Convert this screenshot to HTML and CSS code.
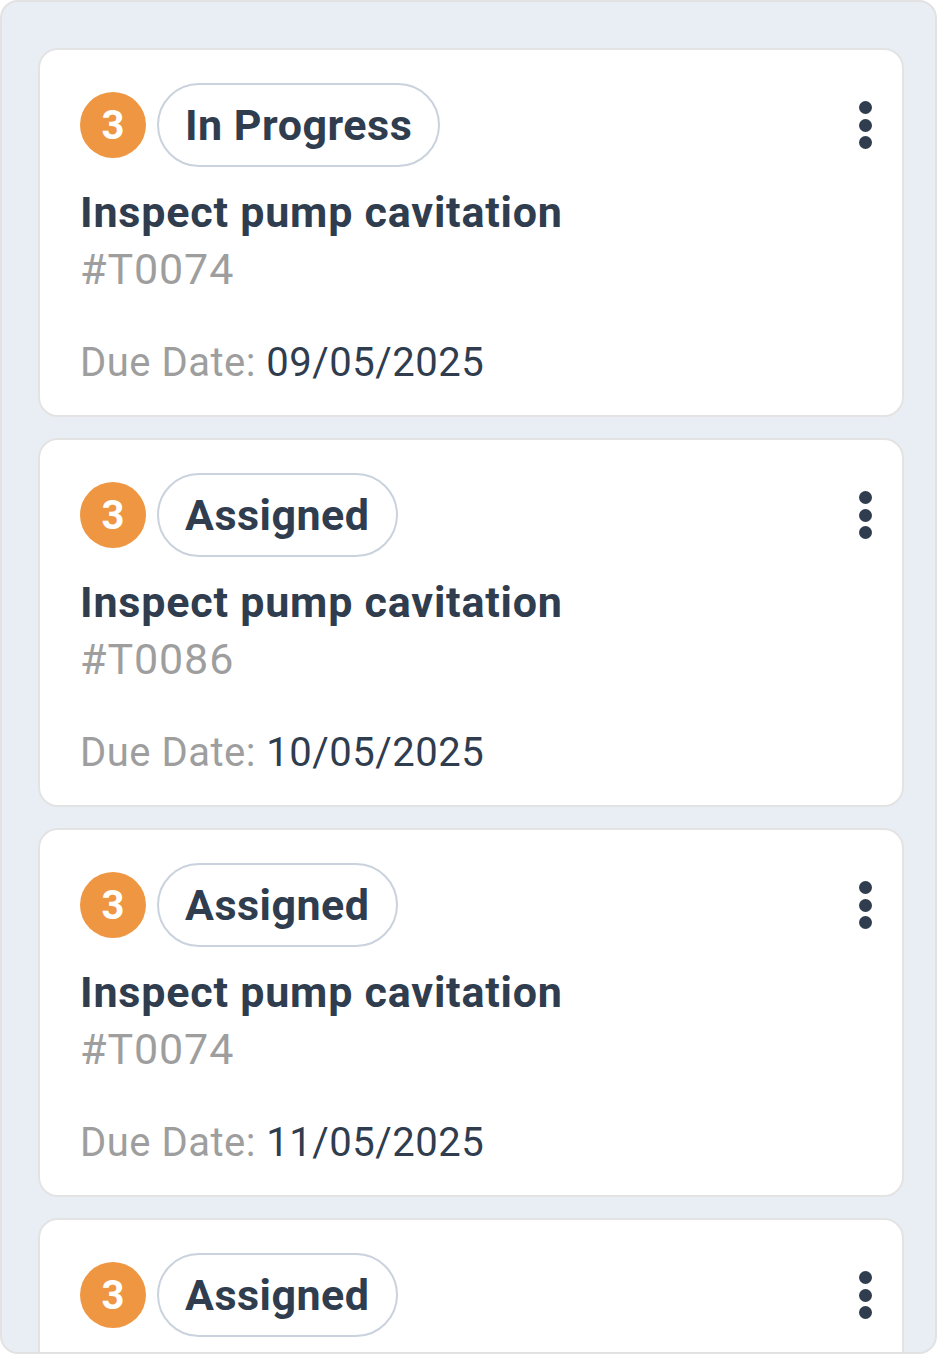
FILE: index.html
```html
<!DOCTYPE html>
<html lang="en">
<head>
    <meta charset="UTF-8">
    <meta name="viewport" content="width=device-width, initial-scale=1.0">
    <title>Tasks</title>
    <link rel="stylesheet" href="styles.css">
</head>
<body>
    <div class="column">
        <!-- task cards -->
        <div class="task-card">
            <div class="task-head">
                <span class="priority">3</span>
                <span class="status">In Progress</span>
                <span class="menu"><i></i><i></i><i></i></span>
            </div>
            <div class="task-title">Inspect pump cavitation</div>
            <div class="task-id">#T0074</div>
            <div class="task-due">Due Date: <span>09/05/2025</span></div>
        </div>
        <div class="task-card">
            <div class="task-head">
                <span class="priority">3</span>
                <span class="status">Assigned</span>
                <span class="menu"><i></i><i></i><i></i></span>
            </div>
            <div class="task-title">Inspect pump cavitation</div>
            <div class="task-id">#T0086</div>
            <div class="task-due">Due Date: <span>10/05/2025</span></div>
        </div>
        <div class="task-card">
            <div class="task-head">
                <span class="priority">3</span>
                <span class="status">Assigned</span>
                <span class="menu"><i></i><i></i><i></i></span>
            </div>
            <div class="task-title">Inspect pump cavitation</div>
            <div class="task-id">#T0074</div>
            <div class="task-due">Due Date: <span>11/05/2025</span></div>
        </div>
        <div class="task-card">
            <div class="task-head">
                <span class="priority">3</span>
                <span class="status">Assigned</span>
                <span class="menu"><i></i><i></i><i></i></span>
            </div>
            <div class="task-title">Inspect pump cavitation</div>
            <div class="task-id">#T0074</div>
            <div class="task-due">Due Date: <span>12/05/2025</span></div>
        </div>
    </div>
</body>
</html>
```

FILE: styles.css
```css
* {
    box-sizing: border-box;
}
body {
    margin: 0;
    font-family: Roboto, "Liberation Sans", sans-serif;
    background-color: #ffffff;
}
.column {
    width: 937px;
    height: 1354px;
    background-color: #e9eef5;
    border: 2px solid #e2e2e2;
    border-radius: 18px;
    padding: 46px 31px 0 36px;
    display: flex;
    flex-direction: column;
    gap: 21px;
    overflow: hidden;
}
.task-card {
    flex-shrink: 0;
    background: white;
    border: 2px solid #e3e3e3;
    border-radius: 20px;
    padding: 33px 30px 24px 40px;
}
.task-head {
    display: flex;
    align-items: center;
    height: 84px;
}
.priority {
    width: 66px;
    height: 66px;
    border-radius: 50%;
    background-color: #ef9642;
    color: white;
    font-size: 40px;
    font-weight: 700;
    display: flex;
    align-items: center;
    justify-content: center;
}
.status {
    margin-left: 11px;
    height: 84px;
    padding: 0 26px;
    border: 2px solid #c9d2dd;
    border-radius: 42px;
    color: #2f3d4f;
    font-size: 43px;
    font-weight: 700;
    letter-spacing: 0.5px;
    display: flex;
    align-items: center;
}
.menu {
    margin-left: auto;
    display: flex;
    flex-direction: column;
    gap: 4.5px;
}
.menu i {
    display: block;
    width: 13px;
    height: 13px;
    border-radius: 50%;
    background-color: #2f3d4f;
}
.task-title {
    margin-top: 17px;
    font-size: 43px;
    line-height: 57px;
    font-weight: 700;
    letter-spacing: 0.8px;
    color: #2f3d4f;
}
.task-id {
    font-size: 43px;
    line-height: 57px;
    letter-spacing: 0.9px;
    color: #9e9e9e;
}
.task-due {
    margin-top: 36px;
    font-size: 40px;
    line-height: 57px;
    letter-spacing: 0.5px;
    color: #9e9e9e;
}
.task-due span {
    color: #2f3d4f;
}
```
